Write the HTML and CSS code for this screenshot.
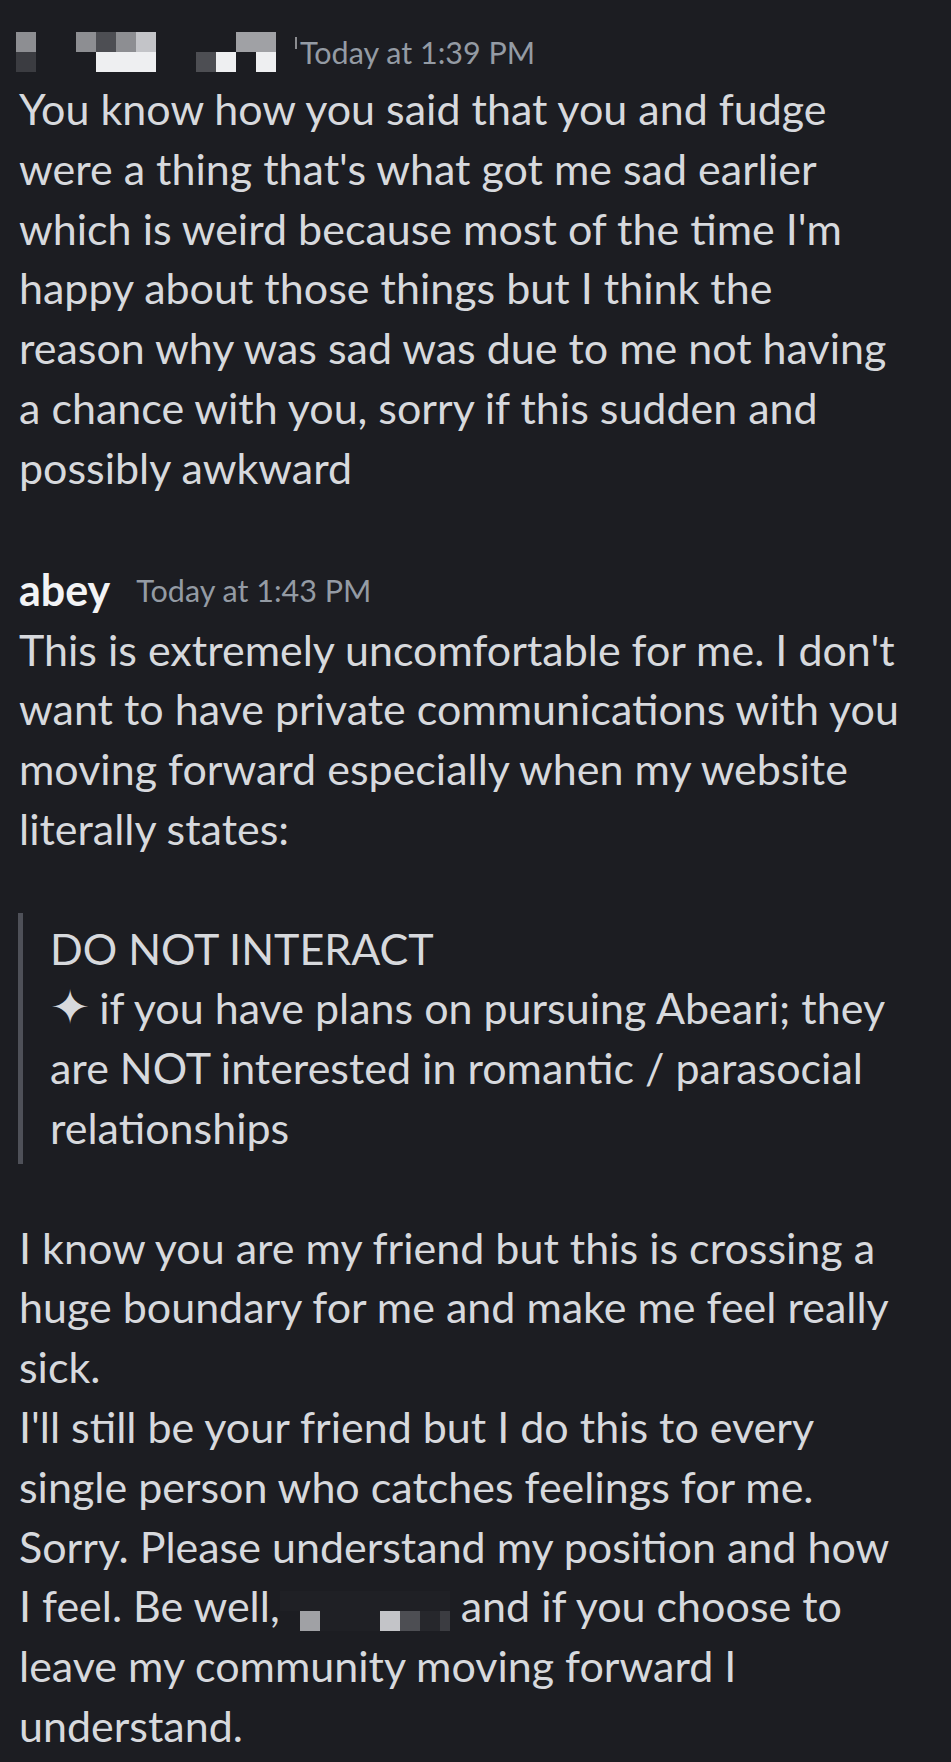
FILE: index.html
```html
<!DOCTYPE html>
<html lang="en">
<head>
    <meta charset="UTF-8">
    <meta name="viewport" content="width=device-width, initial-scale=1.0">
    <title>Messages</title>
    <link rel="stylesheet" href="styles.css">
</head>
<body>

<div class="chat">

    <div class="message first">
        <div class="header">
            <span class="blob name-blob">
                <i class="p3"></i><i></i><i></i><i class="p3"></i><i class="p2"></i><i class="p3"></i><i class="p5"></i><i></i><i></i><i></i><i></i><i class="p4"></i><i class="p4"></i>
                <i class="p1"></i><i></i><i></i><i></i><i class="p6"></i><i class="p6"></i><i class="p6"></i><i></i><i></i><i class="p2"></i><i class="p6"></i><i></i><i class="p6"></i>
            </span>
            <span class="tick"></span>
            <span class="time">Today at 1:39 PM</span>
        </div>
        <div class="content">
            <p>You know how you said that you and fudge<br>
            were a thing that's what got me sad earlier<br>
            which is weird because most of the time I'm<br>
            happy about those things but I think the<br>
            reason why was sad was due to me not having<br>
            a chance with you, sorry if this sudden and<br>
            possibly awkward</p>
        </div>
    </div>

    <div class="message">
        <div class="header">
            <span class="username">abey</span>
            <span class="time">Today at 1:43 PM</span>
        </div>
        <div class="content">
            <p class="spaced">This is extremely uncomfortable for me. I don't<br>
            want to have private communications with you<br>
            moving forward especially when my website<br>
            literally states:</p>

            <blockquote>DO NOT INTERACT<br>
            <span class="star">✦</span> if you have plans on pursuing Abeari; they<br>
            are NOT interested in romantic / parasocial<br>
            relationships</blockquote>

            <p>I know you are my friend but this is crossing a<br>
            huge boundary for me and make me feel really<br>
            sick.<br>
            I'll still be your friend but I do this to every<br>
            single person who catches feelings for me.<br>
            Sorry. Please understand my position and how<br>
            I feel. Be well,<span class="blob inline-blob"><i class="f"></i><i class="f"></i><i class="f"></i><i class="f"></i><i class="f"></i><i class="f"></i><i class="f"></i><i class="f"></i><i class="f"></i><i></i><i class="p4"></i><i class="f"></i><i class="f"></i><i class="f"></i><i class="p5"></i><i class="p2"></i><i class="p0"></i><i class="p1"></i></span> and if you choose to<br>
            leave my community moving forward I<br>
            understand.</p>
        </div>
    </div>

</div>

</body>
</html>
```

FILE: styles.css
```css
body {
    margin: 0;
    background-color: #1c1d22;
    font-family: Lato, 'Noto Sans', sans-serif;
    color: #d7d9dd;
}
.chat {
    padding: 25px 19px 0 19px;
}
.message {
    margin-top: 62px;
}
.message.first {
    margin-top: 0;
}
.header {
    display: flex;
    align-items: center;
    height: 60px;
}
.first .header {
    height: 54px;
}
.username {
    font-size: 43px;
    font-weight: bold;
    color: #f2f3f5;
    margin-right: 26px;
}
.time {
    font-size: 30.5px;
    color: #949ba4;
}
.tick {
    width: 2px;
    height: 12px;
    background-color: #8b8c90;
    align-self: flex-start;
    margin: 12px 3px 0 19px;
}
.content {
    font-size: 43px;
    line-height: 59.8px;
    white-space: nowrap;
}
.content p {
    margin: 0;
}
.content p.spaced {
    margin-bottom: 59.8px;
}
blockquote {
    margin: -6px 0 53.8px -1px;
    padding: 6px 0 6px 27px;
    border-left: 5px solid #4e5058;
}
.star {
    font-family: 'DejaVu Sans', sans-serif;
    font-size: 48px;
    line-height: 0;
    margin-right: -2px;
}

/* pixelated names */
.blob {
    display: inline-grid;
}
.blob i {
    display: block;
    background-color: #1c1d22;
}
.name-blob {
    grid-template-columns: repeat(13, 20px);
    grid-auto-rows: 20px;
    margin-left: -3px;
}
.inline-blob {
    grid-template-columns: repeat(8, 20px) 10px;
    grid-auto-rows: 20px;
    vertical-align: text-bottom;
}
.blob i.f { background-color: #1f2025; }
.blob i.p0 { background-color: #26272c; }
.blob i.p1 { background-color: #3b3c41; }
.blob i.p2 { background-color: #4d4e53; }
.blob i.p3 { background-color: #8d8e92; }
.blob i.p4 { background-color: #a0a1a5; }
.blob i.p5 { background-color: #c3c4c8; }
.blob i.p6 { background-color: #eeeff1; }
```
